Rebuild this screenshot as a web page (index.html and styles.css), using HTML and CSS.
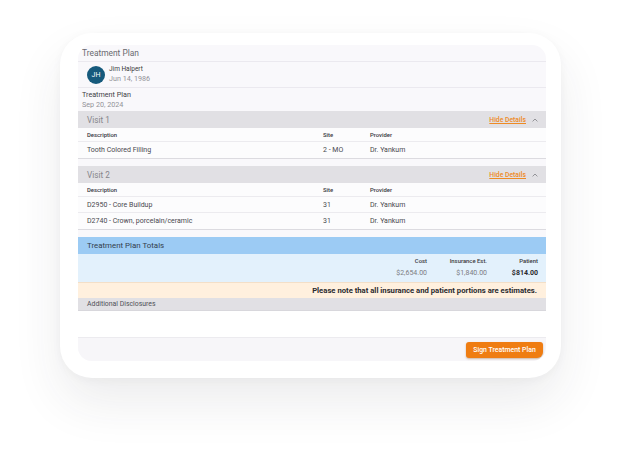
FILE: index.html
```html
<!DOCTYPE html>
<html>
<head>
<meta charset="utf-8">
<link rel="stylesheet" href="styles.css">
</head>
<body>
<div class="stage">
  <div class="card">
    <div class="panel">
      <div class="title-row"><span class="title">Treatment Plan</span></div>
      <div class="patient-row">
        <div class="avatar">JH</div>
        <div class="patient-info">
          <div class="name">Jim Halpert</div>
          <div class="sub">Jun 14, 1986</div>
        </div>
      </div>
      <div class="plan-row">
        <div class="plan-name">Treatment Plan</div>
        <div class="sub">Sep 20, 2024</div>
      </div>

      <div class="visit">
        <div class="visit-head">
          <span class="visit-title">Visit 1</span>
          <span class="toggle"><span class="hide">Hide Details</span>
            <svg class="chev" width="6" height="4" viewBox="0 0 6 4"><path d="M0.6 3.4 L3 1 L5.4 3.4" fill="none" stroke="#8a8a8f" stroke-width="0.9"/></svg>
          </span>
        </div>
        <div class="trow thead"><span class="c-desc">Description</span><span class="c-site">Site</span><span class="c-prov">Provider</span></div>
        <div class="trow tbody last"><span class="c-desc">Tooth Colored Filling</span><span class="c-site">2 - MO</span><span class="c-prov">Dr. Yankum</span></div>
      </div>

      <div class="visit">
        <div class="visit-head">
          <span class="visit-title">Visit 2</span>
          <span class="toggle"><span class="hide">Hide Details</span>
            <svg class="chev" width="6" height="4" viewBox="0 0 6 4"><path d="M0.6 3.4 L3 1 L5.4 3.4" fill="none" stroke="#8a8a8f" stroke-width="0.9"/></svg>
          </span>
        </div>
        <div class="trow thead"><span class="c-desc">Description</span><span class="c-site">Site</span><span class="c-prov">Provider</span></div>
        <div class="trow tbody"><span class="c-desc">D2950 - Core Buildup</span><span class="c-site">31</span><span class="c-prov">Dr. Yankum</span></div>
        <div class="trow tbody last"><span class="c-desc">D2740 - Crown, porcelain/ceramic</span><span class="c-site">31</span><span class="c-prov">Dr. Yankum</span></div>
      </div>

      <div class="totals">
        <div class="totals-head">Treatment Plan Totals</div>
        <div class="totals-body">
          <div class="tcol t-cost"><span class="tl">Cost</span><span class="tv">$2,654.00</span></div>
          <div class="tcol t-ins"><span class="tl">Insurance Est.</span><span class="tv">$1,840.00</span></div>
          <div class="tcol t-pat"><span class="tl">Patient</span><span class="tv strong">$814.00</span></div>
        </div>
        <div class="note">Please note that all insurance and patient portions are estimates.</div>
        <div class="disc">Additional Disclosures</div>
      </div>
      <div class="blank"></div>
      <div class="footer">
        <button class="sign">Sign Treatment Plan</button>
      </div>
    </div>
  </div>
</div>
</body>
</html>
```

FILE: styles.css
```css
* { box-sizing: border-box; }
html, body {
  margin: 0;
  padding: 0;
  background: #ffffff;
}
body {
  font-family: Roboto, "Liberation Sans", Arial, sans-serif;
  width: 622px;
  height: 470px;
  overflow: hidden;
}
.stage {
  padding: 33px 0 0 60px;
}
.card {
  width: 501px;
  height: 345px;
  background: #ffffff;
  border-radius: 32px;
  box-shadow: 0 24px 50px rgba(40, 40, 60, 0.09), 0 2px 10px rgba(40, 40, 60, 0.04);
  padding: 12px 15px 16px 18px;
}
.panel {
  width: 468px;
  height: 316px;
  background: #f9f8fb;
  border-radius: 14px;
  overflow: hidden;
  display: flex;
  flex-direction: column;
}
.title-row {
  height: 17px;
  border-bottom: 1px solid #ebe9ef;
  display: flex;
  align-items: center;
  padding-left: 4px;
}
.title {
  font-size: 8.4px;
  color: #6a6a70;
}
.patient-row {
  height: 26px;
  border-bottom: 1px solid #ebe9ef;
  display: flex;
  align-items: center;
  padding-left: 9px;
  gap: 4px;
}
.avatar {
  width: 18px;
  height: 18px;
  border-radius: 50%;
  background: #165a7c;
  color: #ffffff;
  font-size: 7px;
  display: flex;
  align-items: center;
  justify-content: center;
}
.patient-info {
  display: flex;
  flex-direction: column;
  gap: 1px;
  margin-top: -1px;
}
.name {
  font-size: 6.5px;
  color: #3a3a40;
}
.sub {
  font-size: 7.2px;
  color: #929298;
}
.plan-row {
  height: 23px;
  display: flex;
  flex-direction: column;
  justify-content: center;
  padding-left: 4px;
  gap: 1px;
}
.plan-name {
  font-size: 7.2px;
  color: #404046;
}
.visit {
  background: #fcfcfd;
  border-bottom: 1px solid #dcdbe0;
  margin-bottom: 7px;
}
.visit-head {
  height: 17px;
  background: #e1e0e4;
  display: flex;
  align-items: center;
  justify-content: space-between;
  padding: 0 8px 0 9px;
}
.visit-title {
  font-size: 8.2px;
  color: #85858b;
}
.toggle {
  display: flex;
  align-items: center;
  gap: 6px;
}
.hide {
  font-size: 6.8px;
  color: #ee8a25;
  font-weight: 500;
  text-decoration: underline;
}
.chev { display: block; }
.trow {
  display: flex;
  align-items: center;
  padding-left: 9px;
}
.thead {
  height: 14px;
  font-size: 5.9px;
  font-weight: 500;
  color: #38383e;
  border-bottom: 1px solid #ecebef;
}
.tbody {
  height: 16px;
  font-size: 7px;
  color: #48484e;
  border-bottom: 1px solid #ecebef;
}
.tbody.last { border-bottom: none; }
.c-desc { width: 236px; }
.c-site { width: 47px; }
.totals {
  display: flex;
  flex-direction: column;
}
.totals-head {
  height: 17px;
  background: #9ccbf4;
  font-size: 7.9px;
  color: #33404c;
  display: flex;
  align-items: center;
  padding-left: 9px;
}
.totals-body {
  height: 29px;
  background: #e3f1fc;
  border-bottom: 1px solid #f3dfc8;
  display: flex;
  justify-content: flex-end;
  padding: 4px 8px 0 0;
}
.tcol {
  display: flex;
  flex-direction: column;
  align-items: flex-end;
  gap: 5px;
}
.t-cost { width: 60px; }
.t-ins { width: 60px; }
.t-pat { width: 51px; }
.tl {
  font-size: 5.9px;
  color: #3a3a40;
  font-weight: 500;
}
.tv {
  font-size: 7px;
  color: #7c7c82;
}
.tv.strong {
  color: #2a2a2e;
  font-weight: 700;
}
.note {
  height: 15px;
  background: #fff0de;
  font-size: 7.7px;
  font-weight: 700;
  color: #2a2a2e;
  display: flex;
  align-items: center;
  justify-content: flex-end;
  padding-right: 9px;
}
.disc {
  height: 13px;
  background: #e1e0e4;
  font-size: 6.9px;
  color: #505056;
  display: flex;
  align-items: center;
  padding-left: 9px;
  border-bottom: 1px solid #d8d7dc;
}
.blank {
  height: 26px;
  background: #ffffff;
}
.footer {
  flex: 1;
  background: #f7f6f9;
  border-top: 1px solid #ecebef;
  display: flex;
  justify-content: flex-end;
  align-items: flex-start;
  padding: 4px 3px 0 0;
}
.sign {
  width: 77px;
  height: 16px;
  background: #ef7d12;
  border: none;
  border-radius: 3px 3px 6px 3px;
  color: #ffffff;
  font-family: Roboto, "Liberation Sans", Arial, sans-serif;
  font-size: 6.9px;
  font-weight: 500;
  padding: 0;
  box-shadow: 0 1px 2px rgba(120, 60, 0, 0.35);
}
```
